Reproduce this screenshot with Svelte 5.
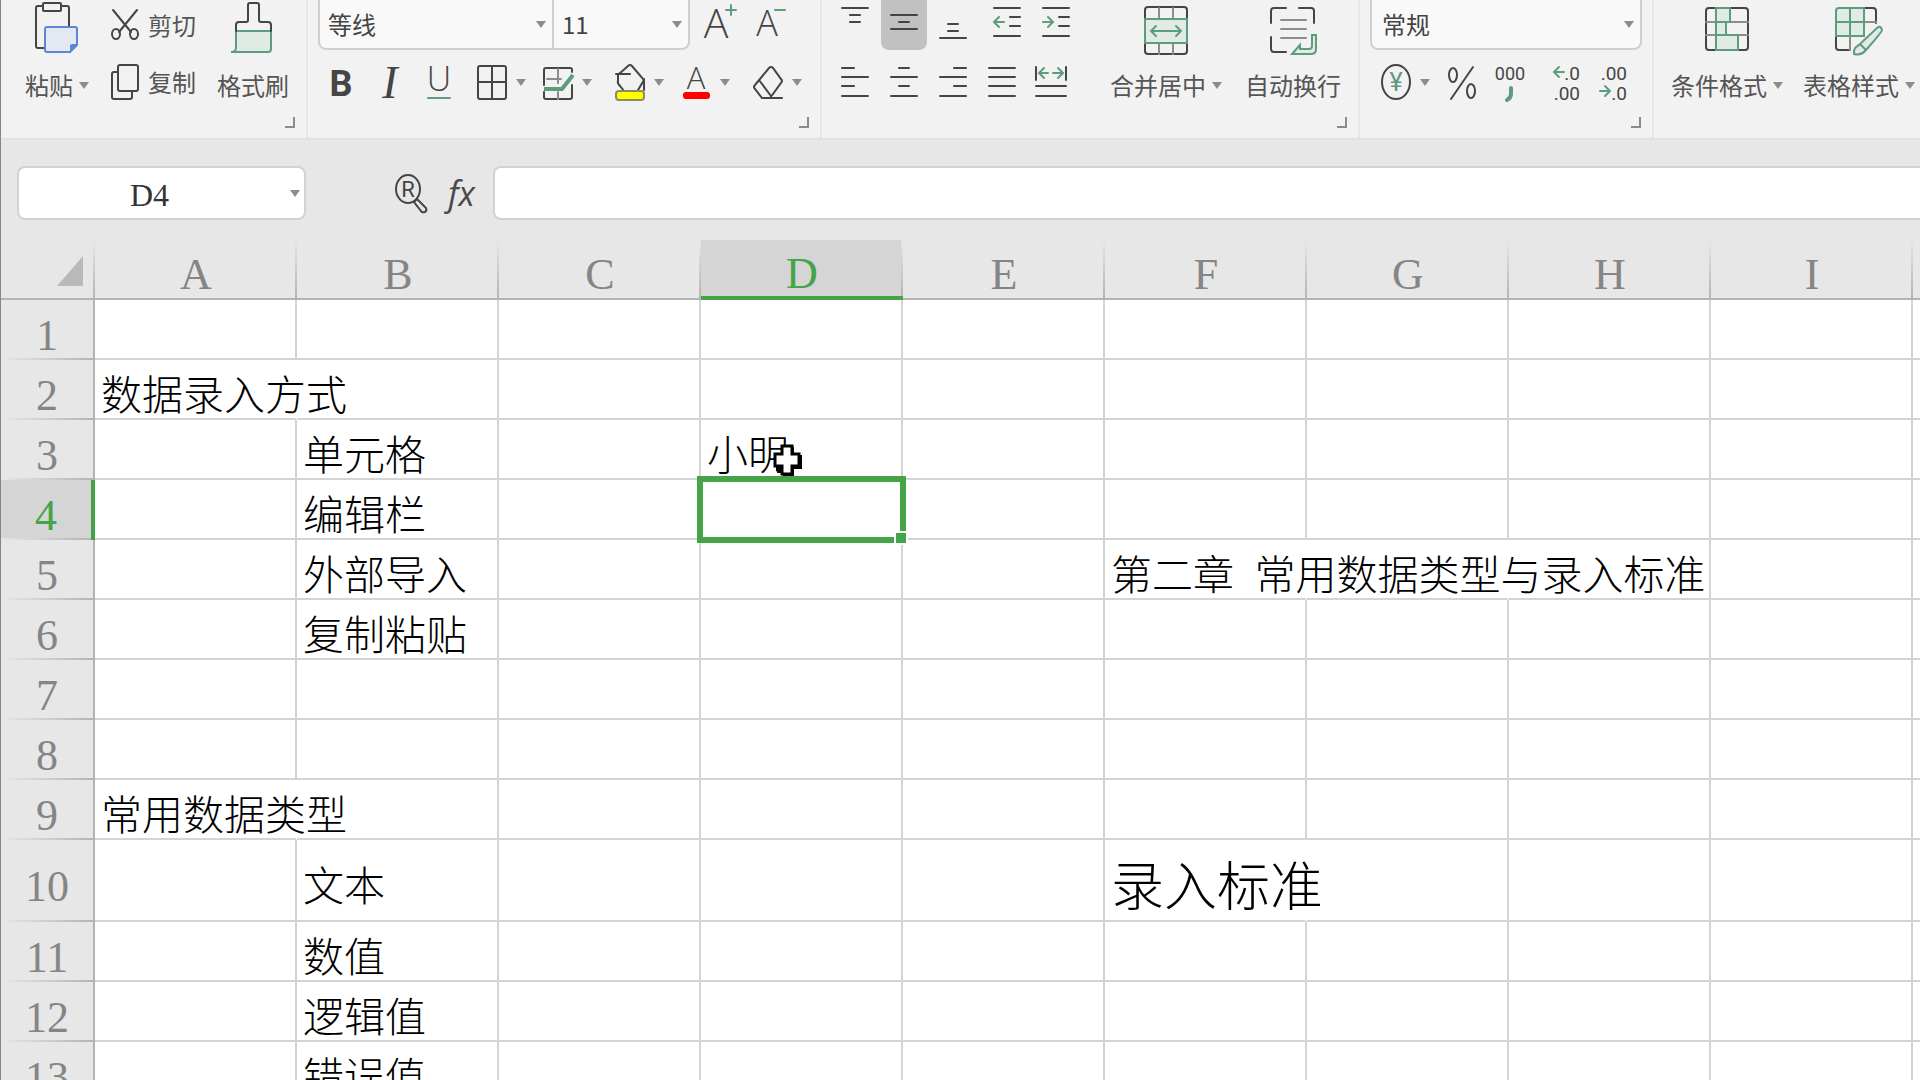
<script lang="ts">
  type Row = {
    n: number;
    tall?: boolean;
    cells: Record<string, string>;
    // columns whose right grid line is covered by overflowing text
    spill?: string[];
  };

  const columns = ["A", "B", "C", "D", "E", "F", "G", "H", "I", "J"];

  const rows: Row[] = [
    { n: 1, cells: {} },
    { n: 2, cells: { A: "数据录入方式" }, spill: ["A"] },
    { n: 3, cells: { B: "单元格", D: "小明" } },
    { n: 4, cells: { B: "编辑栏" } },
    { n: 5, cells: { B: "外部导入", F: "第二章\u2002常用数据类型与录入标准" }, spill: ["F", "G"] },
    { n: 6, cells: { B: "复制粘贴" } },
    { n: 7, cells: {} },
    { n: 8, cells: {} },
    { n: 9, cells: { A: "常用数据类型" }, spill: ["A"] },
    { n: 10, tall: true, cells: { B: "文本", F: "录入标准" }, spill: ["F"] },
    { n: 11, cells: { B: "数值" } },
    { n: 12, cells: { B: "逻辑值" } },
    { n: 13, cells: { B: "错误值" } },
  ];

  let activeCol = $state("D");
  let activeRow = $state(4);
  let cellName = $derived(activeCol + activeRow);
  let cellValue = $derived(rows.find((r) => r.n === activeRow)?.cells[activeCol] ?? "");

  function select(col: string, row: number) {
    activeCol = col;
    activeRow = row;
  }
</script>

{#snippet caret()}
  <svg class="caret" width="10" height="7" viewBox="0 0 10 7" aria-hidden="true"><path d="M0 0h10L5 7z" /></svg>
{/snippet}

{#snippet launcher(label: string)}
  <button class="launcher" aria-label={label}>
    <svg width="11" height="12" viewBox="0 0 11 12"><path d="M9 0v10H0" /></svg>
  </button>
{/snippet}

<div class="app">
  <div class="ribbon">
    <section class="group clipboard">
      <div class="body">
        <button class="big">
          <svg class="ink" width="44" height="52" viewBox="0 0 44 52">
            <path d="M8 4H3q-2 0-2 2v38q0 2 2 2h7M26 4h6q2 0 2 2v18" />
            <rect x="8" y="1" width="18" height="8" rx="1" />
            <path class="blue" d="M12 25h28q2 0 2 2v16l-7 7H12q-2 0-2-2V27q0-2 2-2z" />
            <path class="fold" d="M42 42h-5q-2 0-2 2v7z" />
          </svg>
          <span class="label">粘贴{@render caret()}</span>
        </button>
        <div class="stack">
          <div class="line">
            <button class="side">
              <svg class="ink" width="28" height="32" viewBox="0 0 28 32">
                <path d="M3 1l18 22M27 1L9 23" />
                <ellipse cx="6" cy="25" rx="4" ry="5" />
                <ellipse cx="24" cy="25" rx="4" ry="5" />
              </svg>
              剪切
            </button>
          </div>
          <div class="line second">
            <button class="side">
              <svg class="ink" width="28" height="36" viewBox="0 0 28 36">
                <rect x="8" y="1" width="20" height="26" rx="2" />
                <path d="M8 8H4q-2 0-2 2v23q0 2 2 2h16q2 0 2-2v-6" />
              </svg>
              复制
            </button>
          </div>
        </div>
        <button class="big">
          <svg class="ink" width="42" height="52" viewBox="0 0 42 52">
            <path class="mint" d="M4 29h35v18q0 3-3 3H-1q5 0 5-4z" />
            <path d="M4 29v-6q0-3 3-3h7q2 0 2-2V3q0-2 2-2h7q2 0 2 2v15q0 2 2 2h7q3 0 3 3v6" />
          </svg>
          <span class="label">格式刷</span>
        </button>
      </div>
      {@render launcher("剪贴板")}
    </section>

    <section class="group font">
      <div class="body stack">
        <div class="line">
          <div class="boxes">
            <label class="combo family">
              <select aria-label="字体"><option>等线</option></select>
              {@render caret()}
            </label>
            <label class="combo size">
              <select aria-label="字号"><option>11</option></select>
              {@render caret()}
            </label>
          </div>
          <button class="grow" aria-label="增大字号">
            <svg class="ink" width="34" height="50" viewBox="0 0 34 50">
              <text x="12" y="38" font-size="41" class="thin">A</text>
              <path class="green" d="M22 10h10M27 5v10" />
            </svg>
          </button>
          <button class="grow" aria-label="减小字号">
            <svg class="ink" width="34" height="50" viewBox="0 0 34 50">
              <text x="11" y="36" font-size="36" class="thin">A</text>
              <path class="green" d="M19 10h10" />
            </svg>
          </button>
        </div>
        <div class="line second sets">
          <div class="set wide">
            <button aria-label="加粗">
              <svg class="ink" width="30" height="40" viewBox="0 0 30 40"><text x="15" y="34" font-size="36" class="heavy">B</text></svg>
            </button>
            <button aria-label="倾斜">
              <svg class="ink" width="30" height="40" viewBox="0 0 30 40"><text x="15" y="36" font-size="46" class="slant">I</text></svg>
            </button>
            <button aria-label="下划线">
              <svg class="ink" width="30" height="40" viewBox="0 0 30 40">
                <text x="15" y="29" font-size="34" class="thin">U</text>
                <path class="green" d="M4 36h22" />
              </svg>
            </button>
          </div>
          <div class="set">
            <button aria-label="边框">
              <svg class="ink" width="30" height="40" viewBox="0 0 30 40">
                <rect x="1" y="4" width="28" height="33" rx="2" /><path d="M15 4v33M1 20h28" />
              </svg>
              {@render caret()}
            </button>
            <button aria-label="单元格样式">
              <svg class="ink" width="30" height="40" viewBox="0 0 30 40">
                <path d="M1 23V8q0-2 2-2h24q2 0 2 2v2M1 30v5q0 2 2 2h24q2 0 2-2V23" />
                <path class="faint" d="M15 7v14M4 17h14M15 30v7" />
                <path class="brush" d="M1 27h18L30 13" />
              </svg>
              {@render caret()}
            </button>
          </div>
          <div class="set">
            <button aria-label="填充颜色">
              <svg class="ink" width="30" height="40" viewBox="0 0 30 40">
                <path d="M1 12h14M3 13v5q-1 3 2 6l4 5M4 12L13 4q2-2 4 0l12 14-6 10M29 17v11" />
                <rect class="fill" x="1" y="29" width="28" height="9" rx="3" />
              </svg>
              {@render caret()}
            </button>
            <button aria-label="字体颜色">
              <svg class="ink" width="30" height="40" viewBox="0 0 30 40">
                <text x="15" y="27" font-size="31" class="thin">A</text>
                <rect class="red" x="2" y="30" width="27" height="7" rx="3" />
              </svg>
              {@render caret()}
            </button>
          </div>
          <div class="set">
            <button aria-label="清除">
              <svg class="ink" width="30" height="40" viewBox="0 0 30 40">
                <path d="M16 6q2-2 4 0l8 11q2 2 0 4L17 36H9L2 27q-2-2 0-4zM6 18l12 16M14 36h15" />
              </svg>
              {@render caret()}
            </button>
          </div>
        </div>
      </div>
      {@render launcher("字体设置")}
    </section>

    <section class="group align">
      <div class="body">
        <div class="stack">
          <div class="line tools">
            <button aria-label="顶端对齐">
              <svg class="bars" width="32" height="50" viewBox="0 0 32 50"><path d="M3 8h26M11 15h10M11 22h10" /></svg>
            </button>
            <button class="on" aria-label="垂直居中" aria-pressed="true">
              <svg class="bars" width="32" height="50" viewBox="0 0 32 50"><path d="M3 15h26M11 22h10M3 29h26" /></svg>
            </button>
            <button aria-label="底端对齐">
              <svg class="bars" width="32" height="50" viewBox="0 0 32 50"><path d="M11 24h10M11 31h10M3 38h26" /></svg>
            </button>
            <div class="tools indent">
              <button aria-label="减少缩进量">
                <svg class="bars" width="32" height="50" viewBox="0 0 32 50">
                  <path d="M3 8h26M19 17h10M19 26h10M3 36h26" /><path class="green" d="M13 22H4M8 17l-5 5 5 5" />
                </svg>
              </button>
              <button aria-label="增加缩进量">
                <svg class="bars" width="32" height="50" viewBox="0 0 32 50">
                  <path d="M3 8h26M19 17h10M19 26h10M3 36h26" /><path class="green" d="M3 22h9M8 17l5 5-5 5" />
                </svg>
              </button>
            </div>
          </div>
          <div class="line second tools">
            <button aria-label="左对齐">
              <svg class="bars" width="32" height="40" viewBox="0 0 32 40"><path d="M3 6h12M3 15h26M3 24h12M3 34h26" /></svg>
            </button>
            <button aria-label="水平居中">
              <svg class="bars" width="32" height="40" viewBox="0 0 32 40"><path d="M11 6h10M3 15h26M11 24h10M3 34h26" /></svg>
            </button>
            <button aria-label="右对齐">
              <svg class="bars" width="32" height="40" viewBox="0 0 32 40"><path d="M17 6h12M3 15h26M17 24h12M3 34h26" /></svg>
            </button>
            <button aria-label="两端对齐">
              <svg class="bars" width="32" height="40" viewBox="0 0 32 40"><path d="M3 6h26M3 15h26M3 24h26M3 34h26" /></svg>
            </button>
            <button aria-label="分散对齐">
              <svg class="bars" width="32" height="40" viewBox="0 0 32 40">
                <path d="M1 5v13M31 5v13M1 24h30M1 34h30" />
                <path class="green" d="M13 11H5M9 6l-5 5 5 5M18 11h9M23 6l5 5-5 5" />
              </svg>
            </button>
          </div>
        </div>
        <button class="big">
          <svg class="ink" width="44" height="52" viewBox="0 0 44 52">
            <rect x="1" y="5" width="42" height="47" rx="3" />
            <path class="faint" d="M15 6v11M29 6v11M15 41v11M29 41v11" />
            <path class="mint" d="M1 17h42v24H1z" />
            <path class="green" d="M7 29h30M12 24l-5 5 5 5M32 24l5 5-5 5" />
          </svg>
          <span class="label">合并居中{@render caret()}</span>
        </button>
        <button class="big">
          <svg class="ink" width="50" height="52" viewBox="0 0 50 52">
            <path d="M3 21V9q0-3 3-3h12M31 6h12q3 0 3 3v12M3 35v12q0 3 3 3h12" />
            <path class="faint" d="M13 18h25M13 27h25M13 36h25" />
            <path class="mint" d="M44 33h4v14q0 5-5 5H24l8-9v4h9q3 0 3-3z" />
          </svg>
          <span class="label">自动换行</span>
        </button>
      </div>
      {@render launcher("对齐方式")}
    </section>

    <section class="group number">
      <div class="body stack">
        <div class="line">
          <label class="combo format">
            <select aria-label="数字格式"><option>常规</option></select>
            {@render caret()}
          </label>
        </div>
        <div class="line second sets">
          <div class="set">
            <button aria-label="货币">
              <svg class="ink" width="30" height="40" viewBox="0 0 30 40">
                <ellipse cx="15" cy="20" rx="14" ry="17" />
                <text x="15" y="29" font-size="25" class="tinted">¥</text>
              </svg>
              {@render caret()}
            </button>
            <button aria-label="百分比">
              <svg class="ink" width="30" height="40" viewBox="0 0 30 40">
                <ellipse cx="6" cy="13" rx="4" ry="7" /><ellipse cx="24" cy="29" rx="4" ry="7" /><path d="M26 5L4 37" />
              </svg>
            </button>
            <button aria-label="千位分隔样式">
              <svg class="ink" width="32" height="40" viewBox="0 0 32 40">
                <text x="16" y="18" font-size="18" class="digits">000</text>
                <path class="green comma" d="M17 26v6q0 4-4 6" />
              </svg>
            </button>
          </div>
          <div class="set">
            <button aria-label="增加小数位数">
              <svg class="ink" width="30" height="40" viewBox="0 0 30 40">
                <path class="green" d="M13 10H3M8 5l-5 5 5 5" />
                <text x="29" y="18" font-size="19" class="digits end">.0</text>
                <text x="29" y="38" font-size="19" class="digits end">.00</text>
              </svg>
            </button>
            <button aria-label="减少小数位数">
              <svg class="ink" width="30" height="40" viewBox="0 0 30 40">
                <text x="29" y="18" font-size="19" class="digits end">.00</text>
                <path class="green" d="M2 29h10M7 24l5 5-5 5" />
                <text x="29" y="38" font-size="19" class="digits end">.0</text>
              </svg>
            </button>
          </div>
        </div>
      </div>
      {@render launcher("单元格格式")}
    </section>

    <section class="group styles">
      <div class="body">
        <button class="big">
          <svg class="ink" width="44" height="52" viewBox="0 0 44 52">
            <rect x="1" y="6" width="42" height="42" rx="3" />
            <path class="faint" d="M1 20h42M1 33h42" />
            <path class="mint" d="M11 6h14v14H11zM11 20h10v13H11zM11 33h22v15H11z" />
          </svg>
          <span class="label">条件格式{@render caret()}</span>
        </button>
        <button class="big">
          <svg class="ink" width="48" height="52" viewBox="0 0 48 52">
            <path d="M30 6h8q3 0 3 3v12M1 34v11q0 3 3 3h11" />
            <path class="faint" d="M29 20h12M15 34v14" />
            <path class="mint" d="M1 34V9q0-3 3-3h25v28zM15 6v28M1 20h28" />
            <path class="mint" d="M42 26q4-3 5 2 0 2-16 20-5 6-12 4-1-6 5-9zM25 42l6 6" />
          </svg>
          <span class="label">表格样式{@render caret()}</span>
        </button>
      </div>
    </section>
  </div>

  <div class="formula-bar">
    <div class="name-box">
      <input aria-label="名称框" value={cellName} />
      {@render caret()}
    </div>
    <div class="formula-tools">
      <button aria-label="浏览公式结果">
        <svg class="ink" width="34" height="40" viewBox="0 0 34 40">
          <ellipse cx="14" cy="16" rx="12" ry="14" />
          <text x="14" y="24" font-size="22" class="digits">R</text>
          <path d="M20 29l3-3 9 9q1 3-1 4-3 1-4-1z" />
        </svg>
      </button>
      <button class="fx" aria-label="插入函数">fx</button>
    </div>
    <input class="formula" aria-label="编辑栏" value={cellValue} />
  </div>

  <div class="sheet">
    <table>
      <thead>
        <tr>
          <th class="corner" aria-label="全选">
            <svg width="26" height="30" viewBox="0 0 26 30"><path d="M26 0v30H0z" /></svg>
          </th>
          {#each columns as col}
            <th class="col" class:active={col === activeCol}>{col}</th>
          {/each}
        </tr>
      </thead>
      <tbody>
        {#each rows as row}
          <tr class:tall={row.tall}>
            <th class="row" class:active={row.n === activeRow}>{row.n}</th>
            {#each columns as col}
              <td class:spill={row.spill?.includes(col)} class:large={row.tall && col === "F"} onclick={() => select(col, row.n)}>
                {row.cells[col] ?? ""}
                {#if col === "D" && row.n === 3}
                  <svg class="pointer" width="30" height="35" viewBox="0 0 30 35">
                    <path class="shade" d="M10 3h11v8h8v14h-8v9H10v-7H3V11h7z" />
                    <path class="plus" d="M9 2h10v8h7v12h-7v8H9v-8H2V10h7z" />
                  </svg>
                {/if}
                {#if col === activeCol && row.n === activeRow}
                  <span class="selection"><span class="handle"></span></span>
                {/if}
              </td>
            {/each}
          </tr>
        {/each}
      </tbody>
    </table>
  </div>
</div>

<style>
  :global(body) {
    margin: 0;
    overflow: hidden;
  }

  .app {
    --ink: #454545;
    --green: #5d9c7c;
    --accent: #44a447;
    --grid: #d4d4d4;
    --edge: #b4b4b4;
    display: flex;
    flex-direction: column;
    height: 100vh;
    overflow: hidden;
    background: #e7e7e7;
    border-left: 1px solid #858585;
    box-sizing: border-box;
    color: #555;
    font-family: "Noto Sans CJK SC", sans-serif;
    font-size: 24px;
    line-height: 30px;
  }

  button,
  select,
  input {
    margin: 0;
    padding: 0;
    border: none;
    background: none;
    color: inherit;
    font: inherit;
  }

  button {
    display: flex;
    align-items: center;
    white-space: nowrap;
  }

  svg {
    display: block;
    flex: none;
    overflow: visible;
  }

  /* Ribbon */
  .ribbon {
    display: flex;
    flex: none;
    background: #f2f2f2;
    box-shadow: 0 1px 2px #ddd;
  }

  .group {
    display: flex;
    flex-direction: column;
    flex: none;
    box-sizing: border-box;
    height: 138px;
    padding: 0 10px 9px 10px;
    border-right: 2px solid #e6e6e6;
  }

  .clipboard {
    padding-left: 24px;
  }

  .styles {
    flex: 1;
    padding-left: 17px;
    border-right: none;
  }

  .body {
    display: flex;
    height: 114px;
  }

  .stack {
    display: flex;
    flex-direction: column;
  }

  .clipboard .body {
    gap: 0 21px;
    padding-right: 7px;
  }

  .line {
    display: flex;
    align-items: center;
    height: 50px;
  }

  .second {
    height: 64px;
  }

  .big {
    flex-direction: column;
    gap: 16px;
    padding-top: 2px;
  }

  .label {
    display: flex;
    align-items: center;
    gap: 6px;
  }

  .side {
    gap: 10px;
  }

  .caret path {
    fill: #8c8c8c;
  }

  .launcher {
    align-self: flex-end;
    margin-top: 3px;
  }

  .launcher path {
    fill: none;
    stroke: #8c8c8c;
    stroke-width: 2;
  }

  .boxes {
    display: flex;
    margin-right: 14px;
  }

  .combo {
    display: flex;
    align-items: center;
    box-sizing: border-box;
    height: 50px;
    padding-right: 6px;
    border: 2px solid #d0d0d0;
    border-top: none;
    border-radius: 0 0 8px 8px;
    background: #f9f9f9;
    color: #444;
  }

  .combo select {
    flex: 1;
    min-width: 0;
    appearance: none;
    outline: none;
  }

  .family {
    width: 236px;
    padding-left: 8px;
    border-radius: 0 0 0 8px;
  }

  .size {
    width: 136px;
    padding-left: 8px;
    border-left: none;
    border-radius: 0 0 8px 0;
  }

  .format {
    width: 272px;
    padding-left: 10px;
  }

  .grow + .grow {
    margin-left: 18px;
  }

  .font .body {
    padding-right: 8px;
  }

  .font .second {
    padding-left: 8px;
  }

  .sets {
    gap: 23px;
  }

  .set {
    display: flex;
    gap: 17px;
  }

  .set.wide {
    gap: 19px;
  }

  .set button {
    gap: 9px;
  }

  .number .second {
    gap: 25px;
    padding-left: 11px;
  }

  .align .body {
    gap: 23px;
    padding-right: 7px;
  }

  .align .stack {
    margin-right: 8px;
  }

  .tools {
    gap: 3px;
  }

  .tools button {
    justify-content: center;
    width: 46px;
  }

  .indent {
    display: flex;
    margin-left: 5px;
  }

  .on {
    border-radius: 0 0 8px 8px;
    background: #c1c1c1;
  }

  .styles .body {
    gap: 20px;
  }

  .ink path,
  .ink rect,
  .ink ellipse,
  .bars path {
    fill: none;
    stroke: var(--ink);
    stroke-width: 2;
    stroke-linecap: round;
  }

  .ink text {
    fill: var(--ink);
    font-family: "Open Sans", sans-serif;
    text-anchor: middle;
  }

  .ink .thin {
    font-family: "Open Sans", sans-serif;
    font-weight: 300;
  }

  .ink .heavy {
    font-family: Roboto, sans-serif;
    font-weight: 700;
  }

  .ink .slant {
    font-family: "Liberation Serif", serif;
    font-style: italic;
  }

  .ink .digits {
    font-family: Roboto, sans-serif;
  }

  .ink .end {
    text-anchor: end;
  }

  .ink .tinted {
    fill: var(--green);
    font-family: Roboto, sans-serif;
  }

  .ink .green,
  .bars .green {
    stroke: var(--green);
  }

  .ink .comma {
    stroke-width: 4;
  }

  .ink .brush {
    stroke: var(--green);
    stroke-width: 4;
    stroke-linecap: butt;
  }

  .ink .faint {
    stroke: #8c8c8c;
  }

  .ink .mint {
    fill: #e1ebe5;
    stroke: var(--green);
  }

  .ink .blue {
    fill: #e3e8f3;
    stroke: #5b88d0;
  }

  .ink .fold {
    fill: #5b88d0;
    stroke: none;
  }

  .ink .fill {
    fill: #ff0;
    stroke: #8c8c60;
  }

  .ink .red {
    fill: #f00;
    stroke: none;
  }

  /* Formula bar */
  .formula-bar {
    display: flex;
    align-items: center;
    flex: none;
    height: 102px;
    padding: 8px 0 0 16px;
    box-sizing: border-box;
  }

  .name-box,
  .formula {
    box-sizing: border-box;
    height: 54px;
    border: 2px solid #d2d2d2;
    border-radius: 8px;
    background: #fff;
  }

  .name-box {
    display: flex;
    align-items: center;
    width: 289px;
    padding-right: 4px;
  }

  .name-box input {
    flex: 1;
    min-width: 0;
    padding: 4px 10px 0 0;
    color: #333;
    font-family: "Liberation Serif", serif;
    font-size: 32px;
    text-align: center;
  }

  .formula-tools {
    display: flex;
    align-items: center;
    gap: 20px;
    width: 187px;
    padding-left: 88px;
    box-sizing: border-box;
  }

  .fx {
    color: #4a4a4a;
    font-family: "Open Sans", sans-serif;
    font-size: 34px;
    font-style: italic;
  }

  .formula {
    flex: 1;
    padding-left: 12px;
    border-right: none;
    border-radius: 8px 0 0 8px;
    color: #000;
  }

  /* Sheet */
  .sheet {
    flex: 1;
    min-height: 0;
    overflow: hidden;
  }

  table {
    width: 2114px;
    border-collapse: separate;
    border-spacing: 0;
    table-layout: fixed;
  }

  tbody {
    background: #fff;
  }

  th,
  td {
    box-sizing: border-box;
    padding: 0;
    white-space: nowrap;
  }

  th {
    background-color: #e7e7e7;
    background-repeat: no-repeat;
    color: #858585;
    font-family: "Liberation Serif", serif;
    font-size: 44px;
    font-weight: 400;
    line-height: 44px;
  }

  thead tr {
    height: 59px;
  }

  tbody tr {
    height: 60px;
  }

  tbody .tall {
    height: 82px;
  }

  .corner,
  .col {
    border-bottom: 2px solid var(--edge);
    background-image: linear-gradient(#e7e7e7, var(--edge));
    background-position: right;
    background-size: 2px 100%;
  }

  .corner {
    width: 94px;
    padding: 4px 0 0 56px;
  }

  .corner path {
    fill: #b9b9b9;
  }

  .col {
    width: 202px;
    padding-top: 12px;
  }

  .row {
    padding: 12px 0 0;
    border-right: 2px solid var(--edge);
    background-image: linear-gradient(to right, #e7e7e7, var(--edge));
    background-position: bottom;
    background-size: 100% 2px;
  }

  .col.active {
    border-bottom: 4px solid var(--accent);
    background-color: #d5d5d5;
    color: var(--accent);
  }

  .row.active {
    border-right: 4px solid var(--accent);
    background-color: #d5d5d5;
    color: var(--accent);
  }

  td {
    position: relative;
    padding: 5px 0 0 6px;
    border-right: 2px solid var(--grid);
    border-bottom: 2px solid var(--grid);
    color: #000;
    font-family: "Noto Sans CJK SC", sans-serif;
    font-size: 41px;
    font-weight: 300;
    line-height: 44px;
    cursor: cell;
  }

  td.spill {
    border-right-color: transparent;
  }

  td.large {
    font-size: 53px;
  }

  .pointer {
    position: absolute;
    top: 24px;
    left: 72px;
  }

  .shade {
    fill: #000;
  }

  .plus {
    fill: #fff;
    stroke: #000;
    stroke-width: 3;
  }

  .selection {
    position: absolute;
    inset: -4px -5px -5px -4px;
    z-index: 2;
    border: 6px solid var(--accent);
  }

  .handle {
    position: absolute;
    right: -8px;
    bottom: -8px;
    width: 10px;
    height: 10px;
    border: 2px solid #fff;
    background: var(--accent);
  }
</style>
